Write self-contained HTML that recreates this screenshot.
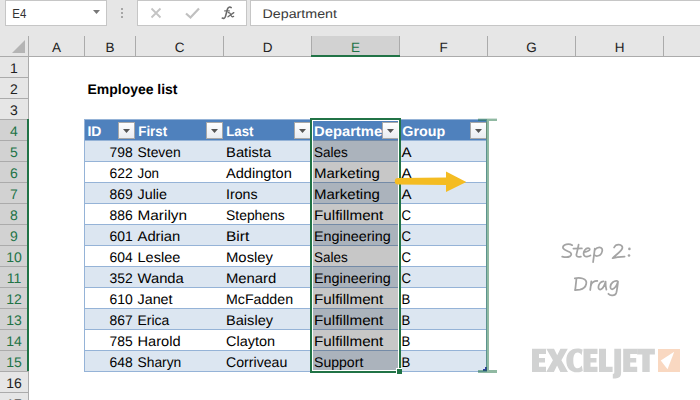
<!DOCTYPE html>
<html><head><meta charset="utf-8"><style>
html,body{margin:0;padding:0;background:#fff;width:700px;height:400px;overflow:hidden;font-family:"Liberation Sans",sans-serif;}
svg{display:block;}
text{shape-rendering:auto;}
path,circle{shape-rendering:geometricPrecision;}
</style></head><body>
<svg width="700" height="400" viewBox="0 0 700 400" shape-rendering="crispEdges" text-rendering="geometricPrecision">
<defs><linearGradient id="fb" x1="0" y1="0" x2="0" y2="1"><stop offset="0" stop-color="#ffffff"/><stop offset="1" stop-color="#e9ecf1"/></linearGradient></defs>
<rect x="0" y="0" width="700" height="400" fill="#e6e6e6" />
<rect x="5" y="0" width="102" height="26" fill="#c6c6c6" />
<rect x="6" y="1" width="100" height="24" fill="#fff" />
<text x="12.3" y="18" font-size="13" fill="#333" textLength="14" lengthAdjust="spacingAndGlyphs" font-family="Liberation Sans" >E4</text>
<path d="M93 10 L100 10 L96.5 14 Z" fill="#777"/>
<rect x="121" y="8" width="2" height="2" fill="#a6a6a6" />
<rect x="121" y="12" width="2" height="2" fill="#a6a6a6" />
<rect x="121" y="16" width="2" height="2" fill="#a6a6a6" />
<rect x="137" y="0" width="110" height="26" fill="#c6c6c6" />
<rect x="138" y="1" width="108" height="24" fill="#fff" />
<rect x="250" y="0" width="461" height="26" fill="#c6c6c6" />
<rect x="251" y="1" width="459" height="24" fill="#fff" />
<path d="M151.5 8.5 L160.5 17.5 M160.5 8.5 L151.5 17.5" stroke="#c4c4c4" stroke-width="1.8" fill="none"/>
<path d="M186 13.5 L190.5 17.5 L199 8.5" stroke="#c0c0c0" stroke-width="2.2" fill="none"/>
<path d="M231.2 7.6 C230 6.6 228 6.9 227.4 9.2 L225.4 16.6 C224.9 18.3 223.6 18.7 222.3 18.1" stroke="#6a6a6a" stroke-width="1.6" fill="none" stroke-linecap="round"/>
<path d="M224.2 10.9 L229.8 10.9" stroke="#6a6a6a" stroke-width="1.2" fill="none"/>
<path d="M228.3 12.6 C229.5 12.3 230 13 230.6 14.3 L231.4 16 C231.9 16.9 232.6 17 233.6 16.4 M233.8 12.6 L228 16.8" stroke="#6a6a6a" stroke-width="1.3" fill="none" stroke-linecap="round"/>
<text x="262.5" y="17.5" font-size="12.5" fill="#3a3a3a" textLength="74.5" lengthAdjust="spacingAndGlyphs" font-family="Liberation Sans" >Department</text>
<rect x="28" y="36" width="1" height="20" fill="#ababab" />
<rect x="84" y="36" width="1" height="20" fill="#ababab" />
<rect x="135" y="36" width="1" height="20" fill="#ababab" />
<rect x="223" y="36" width="1" height="20" fill="#ababab" />
<rect x="311" y="36" width="1" height="20" fill="#ababab" />
<rect x="399" y="36" width="1" height="20" fill="#ababab" />
<rect x="487" y="36" width="1" height="20" fill="#ababab" />
<rect x="575" y="36" width="1" height="20" fill="#ababab" />
<rect x="663" y="36" width="1" height="20" fill="#ababab" />
<rect x="0" y="56" width="700" height="1" fill="#ababab" />
<rect x="312" y="36" width="87" height="19" fill="#d2d2d2" />
<rect x="311" y="55" width="89" height="2" fill="#217346" />
<path d="M12 53 L25 53 L25 40 Z" fill="#b4b4b4"/>
<text x="56.5" y="52" font-size="13.5" fill="#222" text-anchor="middle" font-family="Liberation Sans" >A</text>
<text x="110.0" y="52" font-size="13.5" fill="#222" text-anchor="middle" font-family="Liberation Sans" >B</text>
<text x="179.5" y="52" font-size="13.5" fill="#222" text-anchor="middle" font-family="Liberation Sans" >C</text>
<text x="267.5" y="52" font-size="13.5" fill="#222" text-anchor="middle" font-family="Liberation Sans" >D</text>
<text x="355.5" y="52" font-size="13.5" fill="#217346" text-anchor="middle" font-family="Liberation Sans" >E</text>
<text x="443.5" y="52" font-size="13.5" fill="#222" text-anchor="middle" font-family="Liberation Sans" >F</text>
<text x="531.5" y="52" font-size="13.5" fill="#222" text-anchor="middle" font-family="Liberation Sans" >G</text>
<text x="619.5" y="52" font-size="13.5" fill="#222" text-anchor="middle" font-family="Liberation Sans" >H</text>
<rect x="29" y="57" width="671" height="343" fill="#fff" />
<rect x="0" y="77" width="28" height="1" fill="#ababab" />
<text x="14" y="73" font-size="14" fill="#222" text-anchor="middle" font-family="Liberation Sans" >1</text>
<rect x="0" y="98" width="28" height="1" fill="#ababab" />
<text x="14" y="94" font-size="14" fill="#222" text-anchor="middle" font-family="Liberation Sans" >2</text>
<rect x="0" y="119" width="28" height="1" fill="#ababab" />
<text x="14" y="115" font-size="14" fill="#222" text-anchor="middle" font-family="Liberation Sans" >3</text>
<rect x="0" y="120" width="27" height="20" fill="#d2d2d2" />
<rect x="0" y="140" width="28" height="1" fill="#ababab" />
<text x="14" y="136" font-size="14" fill="#217346" text-anchor="middle" font-family="Liberation Sans" >4</text>
<rect x="0" y="141" width="27" height="20" fill="#d2d2d2" />
<rect x="0" y="161" width="28" height="1" fill="#ababab" />
<text x="14" y="157" font-size="14" fill="#217346" text-anchor="middle" font-family="Liberation Sans" >5</text>
<rect x="0" y="162" width="27" height="20" fill="#d2d2d2" />
<rect x="0" y="182" width="28" height="1" fill="#ababab" />
<text x="14" y="178" font-size="14" fill="#217346" text-anchor="middle" font-family="Liberation Sans" >6</text>
<rect x="0" y="183" width="27" height="20" fill="#d2d2d2" />
<rect x="0" y="203" width="28" height="1" fill="#ababab" />
<text x="14" y="199" font-size="14" fill="#217346" text-anchor="middle" font-family="Liberation Sans" >7</text>
<rect x="0" y="204" width="27" height="20" fill="#d2d2d2" />
<rect x="0" y="224" width="28" height="1" fill="#ababab" />
<text x="14" y="220" font-size="14" fill="#217346" text-anchor="middle" font-family="Liberation Sans" >8</text>
<rect x="0" y="225" width="27" height="20" fill="#d2d2d2" />
<rect x="0" y="245" width="28" height="1" fill="#ababab" />
<text x="14" y="241" font-size="14" fill="#217346" text-anchor="middle" font-family="Liberation Sans" >9</text>
<rect x="0" y="246" width="27" height="20" fill="#d2d2d2" />
<rect x="0" y="266" width="28" height="1" fill="#ababab" />
<text x="14" y="262" font-size="14" fill="#217346" text-anchor="middle" font-family="Liberation Sans" >10</text>
<rect x="0" y="267" width="27" height="20" fill="#d2d2d2" />
<rect x="0" y="287" width="28" height="1" fill="#ababab" />
<text x="14" y="283" font-size="14" fill="#217346" text-anchor="middle" font-family="Liberation Sans" >11</text>
<rect x="0" y="288" width="27" height="20" fill="#d2d2d2" />
<rect x="0" y="308" width="28" height="1" fill="#ababab" />
<text x="14" y="304" font-size="14" fill="#217346" text-anchor="middle" font-family="Liberation Sans" >12</text>
<rect x="0" y="309" width="27" height="20" fill="#d2d2d2" />
<rect x="0" y="329" width="28" height="1" fill="#ababab" />
<text x="14" y="325" font-size="14" fill="#217346" text-anchor="middle" font-family="Liberation Sans" >13</text>
<rect x="0" y="330" width="27" height="20" fill="#d2d2d2" />
<rect x="0" y="350" width="28" height="1" fill="#ababab" />
<text x="14" y="346" font-size="14" fill="#217346" text-anchor="middle" font-family="Liberation Sans" >14</text>
<rect x="0" y="351" width="27" height="20" fill="#d2d2d2" />
<rect x="0" y="371" width="28" height="1" fill="#ababab" />
<text x="14" y="367" font-size="14" fill="#217346" text-anchor="middle" font-family="Liberation Sans" >15</text>
<rect x="0" y="392" width="28" height="1" fill="#ababab" />
<text x="14" y="388" font-size="14" fill="#222" text-anchor="middle" font-family="Liberation Sans" >16</text>
<rect x="0" y="413" width="28" height="1" fill="#ababab" />
<text x="14" y="409" font-size="14" fill="#222" text-anchor="middle" font-family="Liberation Sans" >17</text>
<rect x="28" y="36" width="1" height="364" fill="#ababab" />
<rect x="27" y="119" width="2" height="252" fill="#217346" />
<text x="87.5" y="93.5" font-size="14" fill="#000" font-weight="bold" textLength="90" lengthAdjust="spacingAndGlyphs" font-family="Liberation Sans" >Employee list</text>
<rect x="84" y="119" width="403" height="21" fill="#4f81bd" />
<rect x="84" y="141" width="403" height="20" fill="#dce6f1" />
<rect x="84" y="140" width="403" height="1" fill="#95b3d7" />
<rect x="84" y="161" width="403" height="1" fill="#95b3d7" />
<rect x="84" y="183" width="403" height="20" fill="#dce6f1" />
<rect x="84" y="182" width="403" height="1" fill="#95b3d7" />
<rect x="84" y="203" width="403" height="1" fill="#95b3d7" />
<rect x="84" y="225" width="403" height="20" fill="#dce6f1" />
<rect x="84" y="224" width="403" height="1" fill="#95b3d7" />
<rect x="84" y="245" width="403" height="1" fill="#95b3d7" />
<rect x="84" y="267" width="403" height="20" fill="#dce6f1" />
<rect x="84" y="266" width="403" height="1" fill="#95b3d7" />
<rect x="84" y="287" width="403" height="1" fill="#95b3d7" />
<rect x="84" y="309" width="403" height="20" fill="#dce6f1" />
<rect x="84" y="308" width="403" height="1" fill="#95b3d7" />
<rect x="84" y="329" width="403" height="1" fill="#95b3d7" />
<rect x="84" y="351" width="403" height="20" fill="#dce6f1" />
<rect x="84" y="350" width="403" height="1" fill="#95b3d7" />
<rect x="84" y="371" width="403" height="1" fill="#95b3d7" />
<rect x="84" y="119" width="403" height="1" fill="#95b3d7" />
<rect x="84" y="119" width="1" height="253" fill="#95b3d7" />
<rect x="486" y="119" width="1" height="253" fill="#95b3d7" />
<text x="87.4" y="136" font-size="14" fill="#fff" font-weight="bold" textLength="14" lengthAdjust="spacingAndGlyphs" font-family="Liberation Sans" >ID</text>
<text x="138.3" y="136" font-size="14" fill="#fff" font-weight="bold" textLength="28.8" lengthAdjust="spacingAndGlyphs" font-family="Liberation Sans" >First</text>
<text x="226.3" y="136" font-size="14" fill="#fff" font-weight="bold" textLength="27.2" lengthAdjust="spacingAndGlyphs" font-family="Liberation Sans" >Last</text>
<text x="314.09999999999997" y="136" font-size="14" fill="#fff" font-weight="bold" textLength="68" lengthAdjust="spacingAndGlyphs" font-family="Liberation Sans" >Departme</text>
<text x="402.29999999999995" y="136" font-size="14" fill="#fff" font-weight="bold" textLength="42.9" lengthAdjust="spacingAndGlyphs" font-family="Liberation Sans" >Group</text>
<rect x="118.5" y="122.5" width="16" height="16" fill="url(#fb)" stroke="#a8a8a8"/>
<path d="M123 129 L130 129 L126.5 133 Z" fill="#555"/>
<rect x="206.5" y="122.5" width="16" height="16" fill="url(#fb)" stroke="#a8a8a8"/>
<path d="M211 129 L218 129 L214.5 133 Z" fill="#555"/>
<rect x="294.5" y="122.5" width="16" height="16" fill="url(#fb)" stroke="#a8a8a8"/>
<path d="M299 129 L306 129 L302.5 133 Z" fill="#555"/>
<rect x="382.5" y="122.5" width="16" height="16" fill="url(#fb)" stroke="#a8a8a8"/>
<path d="M387 129 L394 129 L390.5 133 Z" fill="#555"/>
<rect x="470.5" y="122.5" width="16" height="16" fill="url(#fb)" stroke="#a8a8a8"/>
<path d="M475 129 L482 129 L478.5 133 Z" fill="#555"/>
<text x="132.8" y="157" font-size="14" fill="#000" text-anchor="end" textLength="23.2" lengthAdjust="spacingAndGlyphs" font-family="Liberation Sans" >798</text>
<text x="137.5" y="157" font-size="14" fill="#000" textLength="43.3" lengthAdjust="spacingAndGlyphs" font-family="Liberation Sans" >Steven</text>
<text x="226.0" y="157" font-size="14" fill="#000" textLength="45.3" lengthAdjust="spacingAndGlyphs" font-family="Liberation Sans" >Batista</text>
<text x="314.0" y="157" font-size="14" fill="#000" textLength="33.8" lengthAdjust="spacingAndGlyphs" font-family="Liberation Sans" >Sales</text>
<text x="401.6" y="157" font-size="14" fill="#000" textLength="10.05" lengthAdjust="spacingAndGlyphs" font-family="Liberation Sans" >A</text>
<text x="132.8" y="178" font-size="14" fill="#000" text-anchor="end" textLength="23.2" lengthAdjust="spacingAndGlyphs" font-family="Liberation Sans" >622</text>
<text x="137.5" y="178" font-size="14" fill="#000" textLength="21.55" lengthAdjust="spacingAndGlyphs" font-family="Liberation Sans" >Jon</text>
<text x="226.0" y="178" font-size="14" fill="#000" textLength="65.8" lengthAdjust="spacingAndGlyphs" font-family="Liberation Sans" >Addington</text>
<text x="314.0" y="178" font-size="14" fill="#000" textLength="65.8" lengthAdjust="spacingAndGlyphs" font-family="Liberation Sans" >Marketing</text>
<text x="401.6" y="178" font-size="14" fill="#000" textLength="10.05" lengthAdjust="spacingAndGlyphs" font-family="Liberation Sans" >A</text>
<text x="132.8" y="199" font-size="14" fill="#000" text-anchor="end" textLength="23.2" lengthAdjust="spacingAndGlyphs" font-family="Liberation Sans" >869</text>
<text x="137.5" y="199" font-size="14" fill="#000" textLength="29.55" lengthAdjust="spacingAndGlyphs" font-family="Liberation Sans" >Julie</text>
<text x="226.0" y="199" font-size="14" fill="#000" textLength="31.55" lengthAdjust="spacingAndGlyphs" font-family="Liberation Sans" >Irons</text>
<text x="314.0" y="199" font-size="14" fill="#000" textLength="65.8" lengthAdjust="spacingAndGlyphs" font-family="Liberation Sans" >Marketing</text>
<text x="401.6" y="199" font-size="14" fill="#000" textLength="10.05" lengthAdjust="spacingAndGlyphs" font-family="Liberation Sans" >A</text>
<text x="132.8" y="220" font-size="14" fill="#000" text-anchor="end" textLength="23.2" lengthAdjust="spacingAndGlyphs" font-family="Liberation Sans" >886</text>
<text x="137.5" y="220" font-size="14" fill="#000" textLength="49.55" lengthAdjust="spacingAndGlyphs" font-family="Liberation Sans" >Marilyn</text>
<text x="226.0" y="220" font-size="14" fill="#000" textLength="58.8" lengthAdjust="spacingAndGlyphs" font-family="Liberation Sans" >Stephens</text>
<text x="314.0" y="220" font-size="14" fill="#000" textLength="69.3" lengthAdjust="spacingAndGlyphs" font-family="Liberation Sans" >Fulfillment</text>
<text x="401.6" y="220" font-size="14" fill="#000" textLength="9.55" lengthAdjust="spacingAndGlyphs" font-family="Liberation Sans" >C</text>
<text x="132.8" y="241" font-size="14" fill="#000" text-anchor="end" textLength="23.2" lengthAdjust="spacingAndGlyphs" font-family="Liberation Sans" >601</text>
<text x="137.5" y="241" font-size="14" fill="#000" textLength="42.8" lengthAdjust="spacingAndGlyphs" font-family="Liberation Sans" >Adrian</text>
<text x="226.0" y="241" font-size="14" fill="#000" textLength="23.3" lengthAdjust="spacingAndGlyphs" font-family="Liberation Sans" >Birt</text>
<text x="314.0" y="241" font-size="14" fill="#000" textLength="76.8" lengthAdjust="spacingAndGlyphs" font-family="Liberation Sans" >Engineering</text>
<text x="401.6" y="241" font-size="14" fill="#000" textLength="9.55" lengthAdjust="spacingAndGlyphs" font-family="Liberation Sans" >C</text>
<text x="132.8" y="262" font-size="14" fill="#000" text-anchor="end" textLength="23.2" lengthAdjust="spacingAndGlyphs" font-family="Liberation Sans" >604</text>
<text x="137.5" y="262" font-size="14" fill="#000" textLength="42.8" lengthAdjust="spacingAndGlyphs" font-family="Liberation Sans" >Leslee</text>
<text x="226.0" y="262" font-size="14" fill="#000" textLength="47.05" lengthAdjust="spacingAndGlyphs" font-family="Liberation Sans" >Mosley</text>
<text x="314.0" y="262" font-size="14" fill="#000" textLength="33.8" lengthAdjust="spacingAndGlyphs" font-family="Liberation Sans" >Sales</text>
<text x="401.6" y="262" font-size="14" fill="#000" textLength="9.55" lengthAdjust="spacingAndGlyphs" font-family="Liberation Sans" >C</text>
<text x="132.8" y="283" font-size="14" fill="#000" text-anchor="end" textLength="23.2" lengthAdjust="spacingAndGlyphs" font-family="Liberation Sans" >352</text>
<text x="137.5" y="283" font-size="14" fill="#000" textLength="46.3" lengthAdjust="spacingAndGlyphs" font-family="Liberation Sans" >Wanda</text>
<text x="226.0" y="283" font-size="14" fill="#000" textLength="50.3" lengthAdjust="spacingAndGlyphs" font-family="Liberation Sans" >Menard</text>
<text x="314.0" y="283" font-size="14" fill="#000" textLength="76.8" lengthAdjust="spacingAndGlyphs" font-family="Liberation Sans" >Engineering</text>
<text x="401.6" y="283" font-size="14" fill="#000" textLength="9.55" lengthAdjust="spacingAndGlyphs" font-family="Liberation Sans" >C</text>
<text x="132.8" y="304" font-size="14" fill="#000" text-anchor="end" textLength="23.2" lengthAdjust="spacingAndGlyphs" font-family="Liberation Sans" >610</text>
<text x="137.5" y="304" font-size="14" fill="#000" textLength="35.05" lengthAdjust="spacingAndGlyphs" font-family="Liberation Sans" >Janet</text>
<text x="226.0" y="304" font-size="14" fill="#000" textLength="67.05" lengthAdjust="spacingAndGlyphs" font-family="Liberation Sans" >McFadden</text>
<text x="314.0" y="304" font-size="14" fill="#000" textLength="69.3" lengthAdjust="spacingAndGlyphs" font-family="Liberation Sans" >Fulfillment</text>
<text x="401.6" y="304" font-size="14" fill="#000" textLength="8.8" lengthAdjust="spacingAndGlyphs" font-family="Liberation Sans" >B</text>
<text x="132.8" y="325" font-size="14" fill="#000" text-anchor="end" textLength="23.2" lengthAdjust="spacingAndGlyphs" font-family="Liberation Sans" >867</text>
<text x="137.5" y="325" font-size="14" fill="#000" textLength="31.8" lengthAdjust="spacingAndGlyphs" font-family="Liberation Sans" >Erica</text>
<text x="226.0" y="325" font-size="14" fill="#000" textLength="47.05" lengthAdjust="spacingAndGlyphs" font-family="Liberation Sans" >Baisley</text>
<text x="314.0" y="325" font-size="14" fill="#000" textLength="69.3" lengthAdjust="spacingAndGlyphs" font-family="Liberation Sans" >Fulfillment</text>
<text x="401.6" y="325" font-size="14" fill="#000" textLength="8.8" lengthAdjust="spacingAndGlyphs" font-family="Liberation Sans" >B</text>
<text x="132.8" y="346" font-size="14" fill="#000" text-anchor="end" textLength="23.2" lengthAdjust="spacingAndGlyphs" font-family="Liberation Sans" >785</text>
<text x="137.5" y="346" font-size="14" fill="#000" textLength="43.05" lengthAdjust="spacingAndGlyphs" font-family="Liberation Sans" >Harold</text>
<text x="226.0" y="346" font-size="14" fill="#000" textLength="49.05" lengthAdjust="spacingAndGlyphs" font-family="Liberation Sans" >Clayton</text>
<text x="314.0" y="346" font-size="14" fill="#000" textLength="69.3" lengthAdjust="spacingAndGlyphs" font-family="Liberation Sans" >Fulfillment</text>
<text x="401.6" y="346" font-size="14" fill="#000" textLength="8.8" lengthAdjust="spacingAndGlyphs" font-family="Liberation Sans" >B</text>
<text x="132.8" y="367" font-size="14" fill="#000" text-anchor="end" textLength="23.2" lengthAdjust="spacingAndGlyphs" font-family="Liberation Sans" >648</text>
<text x="137.5" y="367" font-size="14" fill="#000" textLength="43.8" lengthAdjust="spacingAndGlyphs" font-family="Liberation Sans" >Sharyn</text>
<text x="226.0" y="367" font-size="14" fill="#000" textLength="61.3" lengthAdjust="spacingAndGlyphs" font-family="Liberation Sans" >Corriveau</text>
<text x="314.0" y="367" font-size="14" fill="#000" textLength="49.3" lengthAdjust="spacingAndGlyphs" font-family="Liberation Sans" >Support</text>
<text x="401.6" y="367" font-size="14" fill="#000" textLength="8.8" lengthAdjust="spacingAndGlyphs" font-family="Liberation Sans" >B</text>
<rect x="313" y="140" width="85" height="230" fill="#000" fill-opacity="0.22"/>
<rect x="310" y="118" width="91" height="2" fill="#217346" />
<rect x="310" y="118" width="2" height="255" fill="#217346" />
<rect x="399" y="118" width="2" height="255" fill="#217346" />
<rect x="310" y="371" width="86" height="2" fill="#217346" />
<rect x="312" y="120" width="86" height="1" fill="#fff" />
<rect x="312" y="120" width="1" height="250" fill="#fff" />
<rect x="398" y="120" width="1" height="248" fill="#fff" />
<rect x="312" y="370" width="84" height="1" fill="#fff" />
<rect x="396" y="368" width="6" height="6" fill="#fff" />
<rect x="397" y="369" width="5" height="5" fill="#217346" />
<rect x="485" y="367" width="2" height="2" fill="#2f3f9f" />
<rect x="483" y="369" width="4" height="2" fill="#2f3f9f" />
<rect x="486" y="119" width="3" height="251" fill="rgba(33,115,70,0.5)" />
<rect x="478" y="119" width="8" height="2" fill="rgba(33,115,70,0.5)" />
<rect x="489" y="119" width="8" height="2" fill="rgba(33,115,70,0.5)" />
<rect x="478" y="118" width="19" height="1" fill="rgba(33,115,70,0.2)" />
<rect x="478" y="370" width="19" height="3" fill="rgba(33,115,70,0.5)" />
<path d="M398 178 L446 177.6 L446 171.6 L466.3 182 L446 192 L446 185 L398 184.4 A3.2 3.2 0 0 1 398 178 Z" fill="#f4bc22"/>
<path d="M572.2 245.2 C570.8 244.2 568.4 243.9 566.3 244.3 C563.8 244.9 562.4 246.6 563.2 248.4 C564 250.1 567.2 250.9 569.6 252 C571.6 253 571.9 255.2 569.9 256.4 C567.8 257.5 564.6 257.3 562.2 256.6" stroke="#a4a4a4" stroke-width="1.75" fill="none" stroke-linecap="round" stroke-linejoin="round"/>
<path d="M578.6 244.6 C578 248.5 577 252 576.4 254.6 C576.1 256.5 577.6 257.3 580.9 256.6" stroke="#a4a4a4" stroke-width="1.75" fill="none" stroke-linecap="round" stroke-linejoin="round"/>
<path d="M573.4 248.6 L581.9 248.4" stroke="#a4a4a4" stroke-width="1.75" fill="none" stroke-linecap="round" stroke-linejoin="round"/>
<path d="M584 252.2 C586.2 251.8 588.9 251.2 589.6 249.9 C590 248.7 589.2 248.1 587.9 248.2 C585.5 248.4 583.7 251 583.6 253.3 C583.5 255.6 585 256.8 587 256.6 C588.3 256.5 589.5 256 590.4 255.5" stroke="#a4a4a4" stroke-width="1.75" fill="none" stroke-linecap="round" stroke-linejoin="round"/>
<path d="M594.8 248.6 C594.3 253 593.6 258 593.1 262.1" stroke="#a4a4a4" stroke-width="1.75" fill="none" stroke-linecap="round" stroke-linejoin="round"/>
<path d="M594.9 249.6 C596.3 248 597.8 247.2 599.5 247.3 C601.6 247.5 602.6 249 602.2 251.2 C601.7 253.9 599.6 255.8 597.3 256 C596.3 256.1 595.3 255.8 594.6 255.2" stroke="#a4a4a4" stroke-width="1.75" fill="none" stroke-linecap="round" stroke-linejoin="round"/>
<path d="M614.1 247.5 C615 245.5 616.9 244.5 618.9 244.6 C621.3 244.8 622.8 246.3 622.3 248.3 C621.8 250.4 619.5 252.3 617 254.3 C615.3 255.7 613.6 257 612.6 258.2 C615.5 257.1 619.8 256.5 624.6 256.5" stroke="#a4a4a4" stroke-width="1.75" fill="none" stroke-linecap="round" stroke-linejoin="round"/>
<path d="M576.4 279 C576 282.7 575.6 286.6 575.2 289.9" stroke="#a4a4a4" stroke-width="1.75" fill="none" stroke-linecap="round" stroke-linejoin="round"/>
<path d="M574.8 278.3 C577.5 277.9 580.6 277.9 582.6 278.5 C585.5 279.4 586.8 281.6 586.2 284 C585.6 286.8 583.3 288.9 579.9 289.6 C578.2 289.9 576.5 290 575.1 290" stroke="#a4a4a4" stroke-width="1.75" fill="none" stroke-linecap="round" stroke-linejoin="round"/>
<path d="M591.3 281.3 C591 284.3 590.6 287.4 590.2 290" stroke="#a4a4a4" stroke-width="1.75" fill="none" stroke-linecap="round" stroke-linejoin="round"/>
<path d="M591 285 C591.8 282.6 593.4 281 597.3 280.9" stroke="#a4a4a4" stroke-width="1.75" fill="none" stroke-linecap="round" stroke-linejoin="round"/>
<path d="M603.6 281.3 C600.6 281.1 598.4 284.6 598.4 287.3 C598.4 289 599.5 289.8 600.8 289.4 C602.8 288.8 604.6 285.3 605.6 281.6 C605.5 284.5 605.7 287.5 606.4 289.6" stroke="#a4a4a4" stroke-width="1.75" fill="none" stroke-linecap="round" stroke-linejoin="round"/>
<path d="M617.4 281 C614 280.4 610.6 283.2 610.4 286.6 C610.3 288.5 611.3 289.5 612.6 289.2 C614.9 288.7 616.9 285.2 618 281.6 C617.6 285.5 617.1 289.7 616.3 292.8 C615.6 295 613.9 295.6 611.9 295.4 C610.5 295.2 609.3 294.6 608.4 293.8" stroke="#a4a4a4" stroke-width="1.75" fill="none" stroke-linecap="round" stroke-linejoin="round"/>
<circle cx="629.4" cy="248.9" r="1.3" fill="#a4a4a4"/>
<circle cx="629" cy="255.5" r="1.3" fill="#a4a4a4"/>
<path d="M532 348.75 H546 V354 H539 V358 H545 V362.5 H539 V366.75 H546 V372 H532 Z" fill="#d1d2d2"/>
<path d="M546.3 348.75 L554 348.75 L557.2 355.2 L560.4 348.75 L567.8 348.75 L561.4 360.2 L568 372 L560.3 372 L557.1 365.6 L553.9 372 L546.2 372 L552.9 360.2 Z" fill="#d1d2d2"/>
<path d="M581.6 355.3 C580.7 353.4 579.2 352.6 577.7 352.6 C574.6 352.6 573.3 355.8 573.3 360.4 C573.3 365 574.6 368.2 577.7 368.2 C579.3 368.2 580.8 367.3 581.8 365.6 L582.8 371 C581.5 371.9 579.6 372.3 577.3 372.3 C570.2 372.3 566.3 367.6 566.3 360.4 C566.3 353.2 570.5 348.4 577.3 348.4 C579.4 348.4 581.4 348.9 582.6 349.6 Z" fill="#d1d2d2"/>
<path d="M583.5 348.75 H597.5 V354 H590.5 V358 H596.5 V362.5 H590.5 V366.75 H597.5 V372 H583.5 Z" fill="#d1d2d2"/>
<path d="M599 348.75 H606 V366.75 H612.6 V372 H599 Z" fill="#d1d2d2"/>
<path d="M614.3 348.75 H621.1 V372.5 C621.1 376.6 619.2 378.4 615.2 378.4 H612.8 V373.8 H613.4 C614.1 373.8 614.3 373.3 614.3 372.3 Z" fill="#d1d2d2"/>
<path d="M623.2 348.75 H637.2 V354 H630.2 V358 H636.2 V362.5 H630.2 V366.75 H637.2 V372 H623.2 Z" fill="#d1d2d2"/>
<path d="M637.1 348.75 H654.9 V354.5 H649.7 V372 H642.3 V354.5 H637.1 Z" fill="#d1d2d2"/>
<rect x="657.6" y="348.6" width="22.3" height="23" fill="#f9d8c1"/>
<path d="M660.75 360.6 L674.25 351.75 L667.5 369.15 Z" fill="#fff"/>
</svg>
</body></html>
